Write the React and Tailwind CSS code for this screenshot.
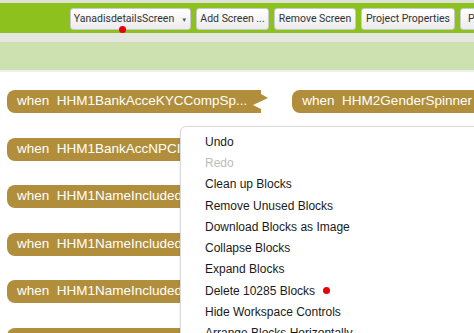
import React from 'react';

const buttons = [
  { label: 'YanadisdetailsScreen', width: 'w-[121px] justify-center', dropdown: true },
  { label: 'Add Screen ...', width: 'w-[73px] justify-center' },
  { label: 'Remove Screen', width: 'w-[82px] justify-center' },
  { label: 'Project Properties', width: 'w-[94px] justify-center' },
  { label: 'Publish to Gallery', width: 'w-[110px] justify-start pl-[7px]' },
];

const menuItems = [
  'Undo',
  'Redo',
  'Clean up Blocks',
  'Remove Unused Blocks',
  'Download Blocks as Image',
  'Collapse Blocks',
  'Expand Blocks',
  'Delete 10285 Blocks',
  'Hide Workspace Controls',
  'Arrange Blocks Horizontally',
];

const leftBlocks = [
  'HHM1BankAccNPCILinkedSpinner',
  'HHM1NameIncludedSpinner',
  'HHM1NameIncludedSpinner',
  'HHM1NameIncludedSpinner',
  'HHM1NameIncludedSpinner',
];

const Block = ({ name, className = '' }) => (
  <div
    className={`h-[23px] bg-[#b18e3b] rounded-[8px] flex items-center pl-[10px] pr-4 text-white text-[13.5px] whitespace-pre shrink-0 ${className}`}
  >
    {'when  ' + name}
  </div>
);

const App = () => {
  return (
    <div className="w-[474px] h-[333px] overflow-hidden bg-white font-['Liberation_Sans',Arial,sans-serif]">
      {/* top strip */}
      <div className="h-[3px] bg-[#dde1d6]" />

      {/* toolbar */}
      <div className="h-[30px] bg-[#8dc11d] flex items-start gap-[5px] pl-[70px] pt-[5px] whitespace-nowrap">
        {buttons.map((b) => (
          <div
            key={b.label}
            className={`relative ${b.width} h-[22px] shrink-0 flex items-center rounded-[3px] border border-[#c9c9c9] bg-gradient-to-b from-white to-[#ececec] text-[#333] text-[10.5px] font-['Roboto',Arial,sans-serif] overflow-hidden`}
          >
            {b.label}
            {b.dropdown && <span className="ml-[7px] text-[6px] text-[#555]">▼</span>}
          </div>
        ))}
      </div>
      <div className="relative">
        <div className="absolute left-[119px] top-[-7px] w-[7px] h-[7px] rounded-full bg-[#e8000b]" />
      </div>

      {/* sub bars */}
      <div className="h-[9px] bg-[#e4e6df]" />
      <div className="h-[28px] bg-[#cde0b0]" />
      <div className="h-[2px] bg-[#eef0ea]" />

      {/* workspace */}
      <div className="relative pt-[18px] pl-[7px]">
        <div className="flex items-start">
          <div className="flex shrink-0">
            <div className="h-[23px] bg-[#b18e3b] rounded-l-[8px] flex items-center pl-[10px] pr-[6px] text-white text-[13.5px] whitespace-pre">
              {'when  HHM1BankAcceKYCCompSp...'}
            </div>
            <svg width="17" height="23" viewBox="0 0 17 23" className="-ml-px">
              <path d="M0 0 H9 V4 L16 8 L1 15 L9 19 V23 H0 Z" fill="#b18e3b" />
            </svg>
          </div>
          <Block name="HHM2GenderSpinner" className="ml-[23px] w-[200px]" />
        </div>

        <div className="flex flex-col gap-[24.5px] mt-[24.5px]">
          {leftBlocks.map((n, i) => (
            <Block key={i} name={n} className="w-[260px]" />
          ))}
        </div>

        {/* context menu */}
        <div className="absolute left-[180px] top-[54px] w-[310px] bg-white border border-[#dadada] rounded-tl-[6px] shadow-[0_1px_3px_rgba(0,0,0,0.12)] pt-[4px]">
          {menuItems.map((item) => (
            <div
              key={item}
              className={`relative h-[21.3px] flex items-center pl-[24px] text-[12px] ${item === 'Redo' ? 'text-[#bdbdbd]' : 'text-[#1a1a1a]'}`}
            >
              {item}
              {item === 'Delete 10285 Blocks' && (
                <span className="ml-[8px] w-[7px] h-[7px] rounded-full bg-[#e8000b]" />
              )}
            </div>
          ))}
        </div>
      </div>
    </div>
  );
};

export default App;
